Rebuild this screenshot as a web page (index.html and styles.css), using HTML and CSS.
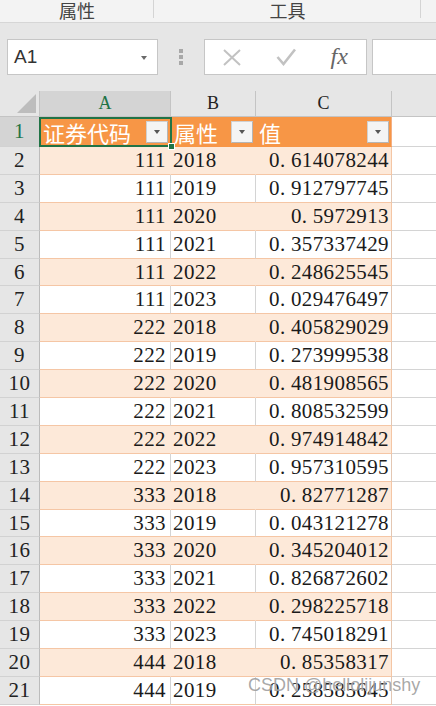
FILE: index.html
```html
<!DOCTYPE html>
<html lang="zh-CN">
<head>
<meta charset="utf-8">
<title>Excel</title>
<link rel="stylesheet" href="styles.css">
</head>
<body>
<div class="ribbon">
  <div class="rgroup g1">属性</div>
  <div class="rgroup g2">工具</div>
  <div class="rgroup g3"></div>
</div>
<div class="fbar">
  <div class="namebox"><span class="nb-text">A1</span><span class="nb-arrow"></span></div>
  <div class="grip"><i></i><i></i><i></i></div>
  <div class="fbtns">
    <span class="fslot"><svg width="18" height="17" viewBox="0 0 18 17"><path d="M1 1 L17 16 M17 1 L1 16" stroke="#c2c2c2" stroke-width="2" fill="none"/></svg></span>
    <span class="fslot"><svg width="20" height="18" viewBox="0 0 20 18"><path d="M1.5 9 L7.5 16 L19 1.5" stroke="#c2c2c2" stroke-width="2.6" fill="none"/></svg></span>
    <span class="fslot fx">fx</span>
  </div>
  <div class="finput"></div>
</div>
<div class="sheet">
  <div class="row colhead">
    <div class="corner"><span class="tri"></span></div>
    <div class="ch sel">A</div>
    <div class="ch">B</div>
    <div class="ch">C</div>
    <div class="ch last"></div>
  </div>
  <div class="row hdr">
    <div class="rh sel">1</div>
    <div class="hc">证券代码<span class="filt"></span></div>
    <div class="hc">属性<span class="filt"></span></div>
    <div class="hc">值<span class="filt"></span></div>
    <div class="ec"></div>
  </div>
  <div class="row band"><div class="rh">2</div><div class="c num">111</div><div class="c">2018</div><div class="c num cc">0<span class="pt">.</span>614078244</div><div class="ec"></div></div>
  <div class="row"><div class="rh">3</div><div class="c num">111</div><div class="c">2019</div><div class="c num cc">0<span class="pt">.</span>912797745</div><div class="ec"></div></div>
  <div class="row band"><div class="rh">4</div><div class="c num">111</div><div class="c">2020</div><div class="c num cc">0<span class="pt">.</span>5972913</div><div class="ec"></div></div>
  <div class="row"><div class="rh">5</div><div class="c num">111</div><div class="c">2021</div><div class="c num cc">0<span class="pt">.</span>357337429</div><div class="ec"></div></div>
  <div class="row band"><div class="rh">6</div><div class="c num">111</div><div class="c">2022</div><div class="c num cc">0<span class="pt">.</span>248625545</div><div class="ec"></div></div>
  <div class="row"><div class="rh">7</div><div class="c num">111</div><div class="c">2023</div><div class="c num cc">0<span class="pt">.</span>029476497</div><div class="ec"></div></div>
  <div class="row band"><div class="rh">8</div><div class="c num">222</div><div class="c">2018</div><div class="c num cc">0<span class="pt">.</span>405829029</div><div class="ec"></div></div>
  <div class="row"><div class="rh">9</div><div class="c num">222</div><div class="c">2019</div><div class="c num cc">0<span class="pt">.</span>273999538</div><div class="ec"></div></div>
  <div class="row band"><div class="rh">10</div><div class="c num">222</div><div class="c">2020</div><div class="c num cc">0<span class="pt">.</span>481908565</div><div class="ec"></div></div>
  <div class="row"><div class="rh">11</div><div class="c num">222</div><div class="c">2021</div><div class="c num cc">0<span class="pt">.</span>808532599</div><div class="ec"></div></div>
  <div class="row band"><div class="rh">12</div><div class="c num">222</div><div class="c">2022</div><div class="c num cc">0<span class="pt">.</span>974914842</div><div class="ec"></div></div>
  <div class="row"><div class="rh">13</div><div class="c num">222</div><div class="c">2023</div><div class="c num cc">0<span class="pt">.</span>957310595</div><div class="ec"></div></div>
  <div class="row band"><div class="rh">14</div><div class="c num">333</div><div class="c">2018</div><div class="c num cc">0<span class="pt">.</span>82771287</div><div class="ec"></div></div>
  <div class="row"><div class="rh">15</div><div class="c num">333</div><div class="c">2019</div><div class="c num cc">0<span class="pt">.</span>043121278</div><div class="ec"></div></div>
  <div class="row band"><div class="rh">16</div><div class="c num">333</div><div class="c">2020</div><div class="c num cc">0<span class="pt">.</span>345204012</div><div class="ec"></div></div>
  <div class="row"><div class="rh">17</div><div class="c num">333</div><div class="c">2021</div><div class="c num cc">0<span class="pt">.</span>826872602</div><div class="ec"></div></div>
  <div class="row band"><div class="rh">18</div><div class="c num">333</div><div class="c">2022</div><div class="c num cc">0<span class="pt">.</span>298225718</div><div class="ec"></div></div>
  <div class="row"><div class="rh">19</div><div class="c num">333</div><div class="c">2023</div><div class="c num cc">0<span class="pt">.</span>745018291</div><div class="ec"></div></div>
  <div class="row band"><div class="rh">20</div><div class="c num">444</div><div class="c">2018</div><div class="c num cc">0<span class="pt">.</span>85358317</div><div class="ec"></div></div>
  <div class="row"><div class="rh">21</div><div class="c num">444</div><div class="c">2019</div><div class="c num cc">0<span class="pt">.</span>258585645</div><div class="ec"></div></div>
  <div class="selection"><span class="handle"></span></div>
  <div class="watermark">CSDN @hellolijunshy</div>
</div>
</body>
</html>
```

FILE: styles.css
```css
* { box-sizing: border-box; }
html, body { margin: 0; padding: 0; }
body {
  width: 436px;
  height: 706px;
  overflow: hidden;
  background: #ffffff;
  font-family: "Liberation Serif", "Noto Sans CJK SC", serif;
}

/* ribbon */
.ribbon {
  display: flex;
  height: 23px;
  background: #f3f3f3;
  border-bottom: 1px solid #d6d6d6;
}
.rgroup {
  position: relative;
  height: 22px;
  font-family: "Noto Sans CJK SC", "Noto Sans", sans-serif;
  font-size: 18px;
  line-height: 20px;
  color: #444;
  text-align: center;
}
.rgroup::after {
  content: "";
  position: absolute;
  right: 0;
  top: 0;
  width: 1px;
  height: 18px;
  background: #d4d4d4;
}
.g1 { width: 154px; }
.g2 { width: 267px; }
.g3 { flex: 1; }
.g3::after { display: none; }

/* formula bar */
.fbar {
  display: flex;
  align-items: flex-start;
  height: 68px;
  padding: 16px 0 0 7px;
  background: #e6e6e6;
}
.namebox {
  position: relative;
  width: 151px;
  height: 36px;
  background: #fff;
  border: 1px solid #c6c6c6;
  display: flex;
  align-items: center;
  padding-left: 6px;
}
.nb-text {
  font-family: "Liberation Sans", Arial, sans-serif;
  font-size: 19px;
  color: #333;
}
.nb-arrow {
  position: absolute;
  left: 133px;
  top: 16px;
  width: 0;
  height: 0;
  border-left: 3.5px solid transparent;
  border-right: 3.5px solid transparent;
  border-top: 4px solid #6a6a6a;
}
.grip {
  display: flex;
  flex-direction: column;
  gap: 2px;
  margin: 10px 0 0 21px;
}
.grip i {
  display: block;
  width: 4px;
  height: 4px;
  background: #a8a8a8;
}
.fbtns {
  display: flex;
  align-items: center;
  width: 163px;
  height: 36px;
  margin-left: 21px;
  background: #fff;
  border: 1px solid #c6c6c6;
}
.fslot {
  width: 54px;
  height: 34px;
  display: flex;
  align-items: center;
  justify-content: center;
}
.fslot svg { display: block; }
.fx {
  font-family: "Liberation Serif", serif;
  font-style: italic;
  font-size: 24px;
  color: #666;
  padding-bottom: 2px;
}
.finput {
  flex: 1;
  height: 36px;
  margin-left: 5px;
  background: #fff;
  border: 1px solid #c6c6c6;
  border-right: none;
}

/* sheet */
.sheet { position: relative; }
.row {
  display: grid;
  grid-template-columns: 40px 131px 85px 136px 1fr;
  height: 27.9px;
}
.row > div {
  border-right: 1px solid #d4d4d4;
  border-bottom: 1px solid #f5c6a5;
  display: flex;
  align-items: center;
  font-size: 21px;
  color: #1a1a1a;
  letter-spacing: 0.4px;
  white-space: nowrap;
  overflow: hidden;
}
.colhead { height: 26px; }
.colhead > div {
  background: #e6e6e6;
  border-right: 1px solid #c4c4c4;
  border-bottom: 1px solid #c4c4c4;
  justify-content: center;
  font-size: 18px;
  color: #222;
  letter-spacing: 0;
}
.colhead > .sel { background: #d4d4d4; color: #217346; }
.colhead > .last { border-right: none; }
.corner { position: relative; }
.tri {
  position: absolute;
  right: 3px;
  bottom: 3px;
  width: 0;
  height: 0;
  border-left: 19px solid transparent;
  border-bottom: 19px solid #bdbdbd;
}

.row > .rh {
  background: #e6e6e6;
  border-right: 1px solid #bcbcbc;
  border-bottom: 1px solid #d2d2d2;
  justify-content: center;
  color: #222;
  letter-spacing: 0.5px;
}
.row > .rh.sel { background: #d4d4d4; color: #217346; }

.hdr { height: 30px; }
.hdr > .hc {
  position: relative;
  background: #f79646;
  border-right-color: #f79646;
  border-bottom-color: #f79646;
  font-family: "Noto Sans CJK SC", sans-serif;
  font-size: 22px;
  color: #fff;
  letter-spacing: 0;
  padding-left: 3px;
}
.hdr > .hc:nth-child(4) { border-right-color: #f4b084; }
.filt {
  position: absolute;
  right: 2px;
  top: 4px;
  width: 22px;
  height: 22px;
  background: #f4f4f4;
  border: 1px solid #d0d0d0;
  border-right-color: #b5b5b5;
  border-bottom-color: #b5b5b5;
}
.filt::after {
  content: "";
  position: absolute;
  left: 6.5px;
  top: 8px;
  width: 0;
  height: 0;
  border-left: 3.5px solid transparent;
  border-right: 3.5px solid transparent;
  border-top: 4px solid #555;
}

.row > .c { padding-left: 2px; }
.row > .num { justify-content: flex-end; padding-left: 0; padding-right: 4px; }
.row > .cc { padding-right: 2px; border-right-color: #e3c7b3; }
.pt { display: inline-block; width: 0.52em; text-align: left; }

.band > .c {
  background: #fde9d9;
  border-right-color: #fde9d9;
}
.band > .cc { border-right-color: #f4c6a5; }
.row > .ec {
  background: #fff;
  border-right: none;
  border-bottom-color: #d4d4d4;
}

.selection {
  position: absolute;
  left: 39px;
  top: 26px;
  width: 133px;
  height: 30px;
  border: 2px solid #217346;
}
.handle {
  position: absolute;
  right: -5px;
  bottom: -5px;
  width: 7px;
  height: 7px;
  background: #217346;
  border: 1px solid #fff;
}

.watermark {
  position: absolute;
  left: 248px;
  top: 584px;
  font-family: "Liberation Sans", Arial, sans-serif;
  font-size: 18px;
  color: rgba(130, 130, 130, 0.7);
  text-shadow: 0 0 1px rgba(255,255,255,0.8);
  white-space: nowrap;
}
```
